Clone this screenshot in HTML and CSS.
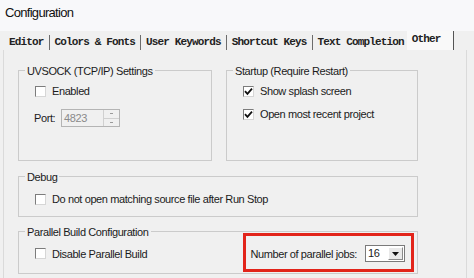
FILE: index.html
```html
<!doctype html>
<html lang="en">
<head>
    <meta charset="UTF-8" />
    <title>Configuration</title>
    <link rel="stylesheet" href="styles.css">
</head>
<body>
    <div id="window">
        <div id="titleBar">Configuration</div>
        <div id="tabBar">
            <span class="tab first">Editor</span>
            <span class="tab">Colors &amp; Fonts</span>
            <span class="tab">User Keywords</span>
            <span class="tab">Shortcut Keys</span>
            <span class="tab last">Text Completion</span>
            <span class="tab active">Other</span>
        </div>
        <div id="tabPanel">
            <div class="groupRow">
                <div class="group topGroup">
                    <div class="groupTitle">UVSOCK (TCP/IP) Settings</div>
                    <div class="checkRow firstRow"><span class="checkBox"></span>Enabled</div>
                    <div class="portRow">
                        <span class="portLabel">Port:</span>
                        <span class="spinInput">
                            <span class="spinText">4823</span>
                            <span class="spinButtons">
                                <span class="spinUp"></span>
                                <span class="spinDown"></span>
                            </span>
                        </span>
                    </div>
                </div>
                <div class="group topGroup">
                    <div class="groupTitle">Startup (Require Restart)</div>
                    <div class="checkRow firstRow">
                        <span class="checkBox checked"><svg width="9" height="9" viewBox="0 0 9 9"><path d="M1 4.2 L3.4 6.8 L8 1.6" fill="none" stroke="#111" stroke-width="1.8"/></svg></span>Show splash screen
                    </div>
                    <div class="checkRow nextRow">
                        <span class="checkBox checked"><svg width="9" height="9" viewBox="0 0 9 9"><path d="M1 4.2 L3.4 6.8 L8 1.6" fill="none" stroke="#111" stroke-width="1.8"/></svg></span>Open most recent project
                    </div>
                </div>
            </div>
            <div class="group debugGroup">
                <div class="groupTitle">Debug</div>
                <div class="checkRow"><span class="checkBox"></span>Do not open matching source file after Run Stop</div>
            </div>
            <div class="group parallelGroup">
                <div class="groupTitle">Parallel Build Configuration</div>
                <div class="parallelRow">
                    <div class="checkRow"><span class="checkBox"></span>Disable Parallel Build</div>
                    <div class="jobsBox">
                        <span class="jobsLabel">Number of parallel jobs:</span>
                        <span class="comboBox">
                            <span class="comboText">16</span>
                            <span class="comboButton"><svg width="7" height="4" viewBox="0 0 7 4"><path d="M0 0 H7 L3.5 4 Z" fill="#111"/></svg></span>
                        </span>
                    </div>
                </div>
            </div>
        </div>
        <div id="highlight"></div>
    </div>
</body>
</html>
```

FILE: styles.css
```css
html, body {
    margin: 0;
    padding: 0;
    background: #f0f0f0;
}
#window {
    position: relative;
    width: 474px;
    height: 278px;
    overflow: hidden;
    font-family: "Liberation Sans", Arial, sans-serif;
    font-size: 11px;
    letter-spacing: -0.4px;
    color: #1b1b1b;
}
#titleBar {
    height: 31px;
    padding-left: 5px;
    line-height: 25px;
    font-size: 13px;
    letter-spacing: -0.7px;
    background: #f8f8fa;
    color: #111;
}
#tabBar {
    display: flex;
    align-items: flex-end;
    height: 19px;
    padding-left: 4px;
    font-family: "Liberation Mono", "Courier New", monospace;
    font-weight: bold;
    font-size: 11px;
    letter-spacing: -0.85px;
    color: #222;
}
#tabBar .tab {
    height: 15px;
    line-height: 15px;
    padding: 0 5px;
    border-right: 1px solid #6c6c6c;
}
#tabBar .tab.last {
    padding-right: 3px;
    border-right: none;
}
#tabBar .tab.active {
    height: 19px;
    line-height: 17px;
    width: 41px;
    padding: 0 0 0 5px;
    background: #f9f9f9;
    border-right: 1px solid #555;
}
#tabPanel {
    height: 228px;
    margin: 0 7px 0 3px;
    padding: 20px 0 0 14px;
    border-left: 1px solid #dadada;
    border-right: 1px solid #dadada;
    box-sizing: border-box;
}
.groupRow {
    display: grid;
    grid-template-columns: 194px 192px;
    column-gap: 14px;
}
.group {
    border: 1px solid #cbcbcb;
    box-sizing: border-box;
    padding-left: 16px;
}
.groupTitle {
    display: table;
    margin: -7px 0 0 -10px;
    padding: 0 2px;
    line-height: 14px;
    background: #f0f0f0;
}
.topGroup {
    height: 91px;
}
.debugGroup {
    width: 400px;
    height: 41px;
    margin-top: 15px;
}
.parallelGroup {
    width: 400px;
    height: 43px;
    margin-top: 14px;
}
.checkRow {
    display: flex;
    align-items: center;
    height: 16px;
    margin-top: 7px;
}
.topGroup .firstRow {
    margin-top: 5px;
}
.topGroup .nextRow {
    margin-top: 7px;
}
.checkBox {
    display: flex;
    align-items: center;
    justify-content: center;
    width: 9px;
    height: 9px;
    margin-right: 6px;
    background: #fff;
    border: 1px solid;
    border-color: #7c7c7c #d6d6d6 #d6d6d6 #7c7c7c;
}
.portRow {
    display: flex;
    align-items: center;
    margin-top: 10px;
    margin-left: -1px;
}
.portLabel {
    width: 27px;
}
.spinInput {
    display: flex;
    width: 59px;
    height: 18px;
    box-sizing: border-box;
    border: 1px solid #b4b4b4;
    background: #f0f0f0;
}
.spinText {
    flex: 1;
    padding-left: 2px;
    line-height: 16px;
    color: #8a8a8a;
}
.spinButtons {
    display: flex;
    flex-direction: column;
    width: 15px;
    border-left: 1px solid #d0d0d0;
}
.spinUp, .spinDown {
    flex: 1;
    position: relative;
}
.spinUp {
    border-bottom: 1px solid #d0d0d0;
}
.spinUp::after, .spinDown::after {
    content: "";
    position: absolute;
    left: 6px;
    top: 3px;
    width: 3px;
    height: 1px;
    background: #9a9a9a;
}
.parallelRow {
    display: flex;
    align-items: center;
    justify-content: space-between;
    margin-top: 6px;
    padding-right: 12px;
}
.parallelRow .checkRow {
    margin-top: 0;
}
.jobsBox {
    display: flex;
    align-items: center;
}
.jobsLabel {
    margin-right: 8px;
}
.comboBox {
    display: flex;
    width: 40px;
    height: 17px;
    box-sizing: border-box;
    border: 1px solid #7a7a7a;
    background: #fff;
}
.comboText {
    flex: 1;
    padding-left: 2px;
    line-height: 15px;
}
.comboButton {
    display: flex;
    align-items: center;
    justify-content: center;
    width: 15px;
    margin: 1px;
    background: #e9e9e9;
    border: 1px solid;
    border-color: #fff #8a8a8a #8a8a8a #fff;
    box-sizing: border-box;
}
#highlight {
    position: absolute;
    left: 243px;
    top: 233px;
    width: 171px;
    height: 39px;
    box-sizing: border-box;
    border: 3px solid #e2241a;
}
```
